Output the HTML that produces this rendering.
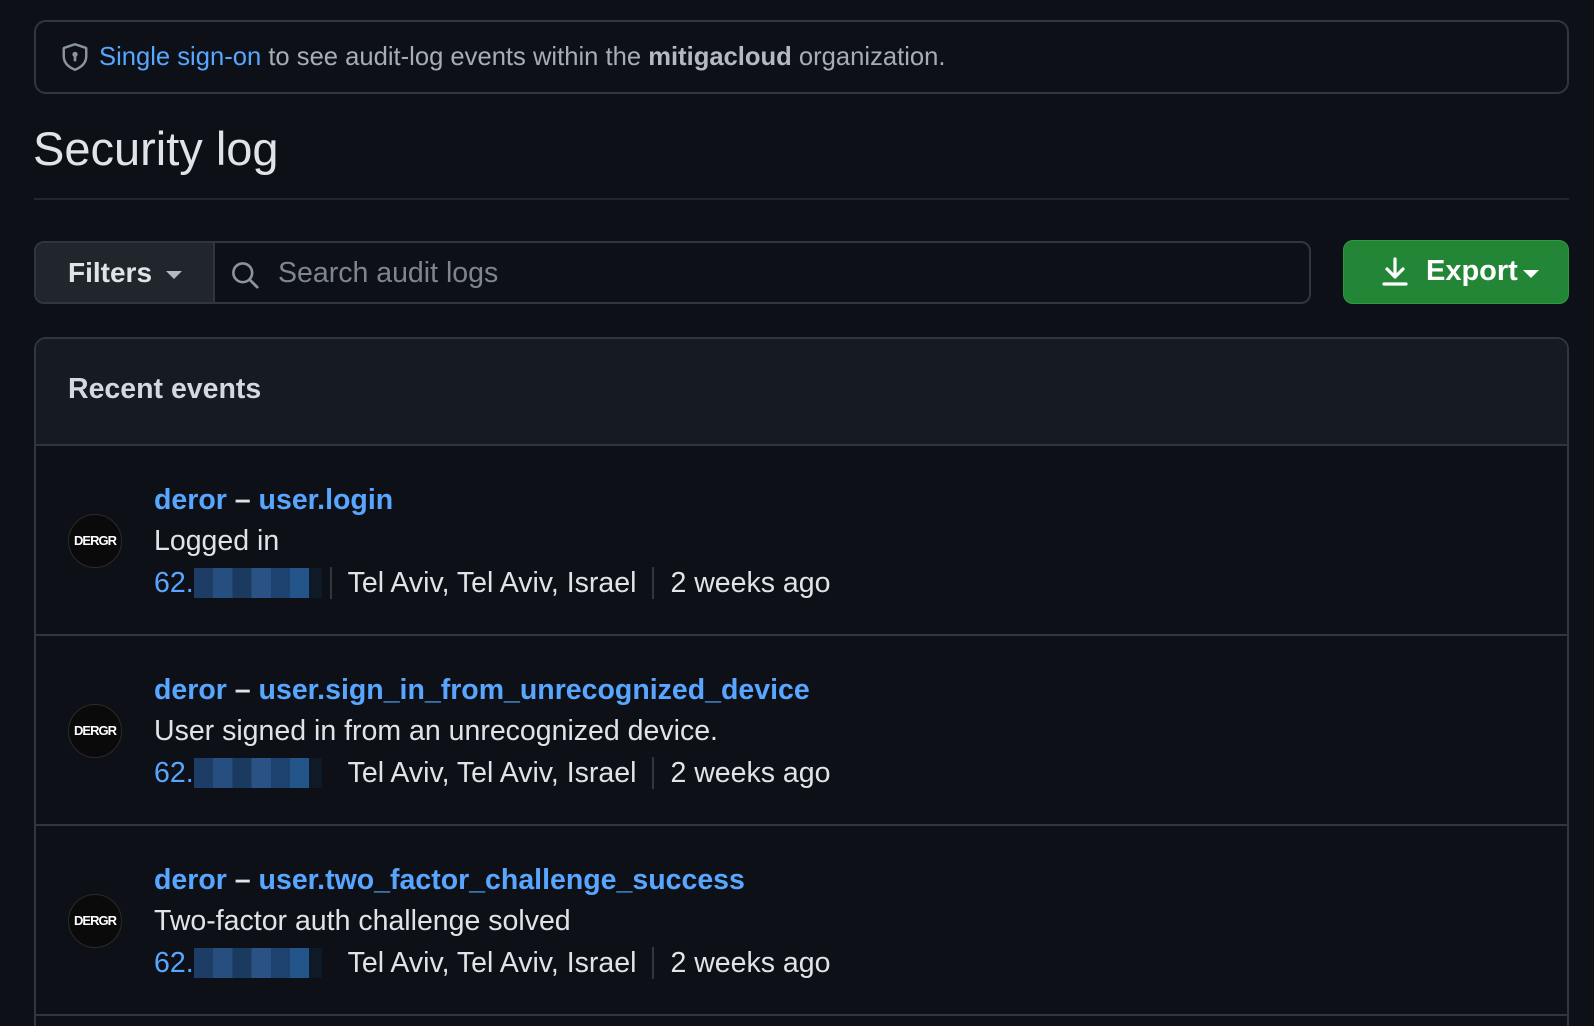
<!DOCTYPE html>
<html style="height:1026px;overflow:hidden"><head><meta charset="utf-8"><style>
*{box-sizing:border-box;margin:0;padding:0}
body{width:1594px;height:1026px;background:#0d1117;font-family:"Liberation Sans",sans-serif;color:#c9d1d9;position:relative;overflow:hidden}
.a{position:absolute;white-space:nowrap}
.blue{color:#58a6ff}
.banner{left:34px;top:20px;width:1535px;height:74px;border:2px solid #30363d;border-radius:12px}
.box{left:34px;top:337px;width:1535px;height:689px;border:2px solid #30363d;border-bottom:none;border-radius:12px 12px 0 0;overflow:hidden}
.hdr{position:absolute;left:0;top:0;right:0;height:107px;background:#161b22;border-bottom:2px solid #30363d}
.row{position:absolute;left:0;right:0;height:190px;border-bottom:2px solid #30363d}
.av{position:absolute;left:32px;width:54px;height:54px;border-radius:50%;background:#0a0a0a;border:1px solid #2a2a2a;color:#fff;font-weight:bold;font-size:13px;letter-spacing:-1px;text-align:center;line-height:52px}
.t{position:absolute;left:118px;font-size:28.5px;white-space:nowrap}
.blur{display:inline-block;width:128px;height:30px;vertical-align:-6px;background:linear-gradient(90deg,#1d3d66 0 15%,#264f80 15% 30%,#1b3a60 30% 45%,#2a5285 45% 60%,#1e4270 60% 75%,#24558a 75% 90%,#0f1a28 90%)}
.sep{display:inline-block;width:2px;height:32px;background:#30363d;vertical-align:-7px;margin:0 16px 0 16px}
.s1{margin-left:8px}
</style></head><body>
<div class="a banner"></div>
<svg class="a" style="left:60px;top:41px" width="30" height="32" viewBox="0 0 16 16"><path fill="none" stroke="#8b949e" stroke-width="1.3" d="M8 1.2 L2.3 3.1 Q2 3.2 2 3.6 V7.5 C2 11 4.6 13.4 8 14.8 C11.4 13.4 14 11 14 7.5 V3.6 Q14 3.2 13.7 3.1 Z"/><circle cx="8" cy="6.6" r="1.4" fill="#8b949e"/><rect x="7.3" y="7" width="1.4" height="3.3" fill="#8b949e"/></svg>
<div class="a" style="left:99px;top:43px;font-size:25.6px;color:#a5adb6"><span class="blue">Single sign-on</span> to see audit-log events within the <b style="color:#b3bac2">mitigacloud</b> organization.</div>
<div class="a" style="left:33px;top:121px;font-size:47px;color:#dfe4e9">Security log</div>
<div class="a" style="left:34px;top:198px;width:1535px;height:2px;background:#21262d"></div>
<div class="a" style="left:34px;top:241px;width:1277px;height:63px;border:2px solid #30363d;border-radius:10px;overflow:hidden">
 <div style="position:absolute;left:0;top:0;width:179px;height:100%;background:#21262d;border-right:2px solid #30363d"></div>
 <div style="position:absolute;left:32px;top:14px;font-size:28px;font-weight:bold;color:#dfe4e9">Filters</div>
 <div style="position:absolute;left:130px;top:28px;width:0;height:0;border-left:8px solid transparent;border-right:8px solid transparent;border-top:8px solid #b1bac4"></div>
 <svg style="position:absolute;left:194px;top:17px" width="30" height="30" viewBox="0 0 16 16"><circle cx="6.8" cy="6.8" r="5" fill="none" stroke="#8b949e" stroke-width="1.4"/><path d="M10.5 10.5 L14.5 14.5" stroke="#8b949e" stroke-width="1.5" stroke-linecap="round"/></svg>
 <div style="position:absolute;left:242px;top:14px;font-size:28.5px;color:#7d858e">Search audit logs</div>
</div>
<div class="a" style="left:1343px;top:240px;width:226px;height:64px;background:#238636;border-radius:10px;border:1px solid #2d9a40">
 <svg style="position:absolute;left:38px;top:16px" width="26" height="30" viewBox="0 0 13 15"><path d="M6.5 1 V10 M2.5 6 L6.5 10 L10.5 6 M1 13.5 H12" stroke="#fff" stroke-width="1.6" fill="none" stroke-linecap="round" stroke-linejoin="round"/></svg>
 <div style="position:absolute;left:82px;top:14px;font-size:29px;font-weight:bold;color:#fff">Export</div>
 <div style="position:absolute;left:179px;top:29px;width:0;height:0;border-left:8px solid transparent;border-right:8px solid transparent;border-top:8px solid #fff"></div>
</div>
<div class="a box">
 <div class="hdr"><div class="t" style="left:32px;top:34px;font-size:28.5px;font-weight:bold;color:#d3d9e0">Recent events</div></div>
 <div class="row" style="top:107px">
  <div class="av" style="top:68px">DERGR</div>
  <div class="t blue" style="top:38px;font-weight:bold">deror <span style="color:#dfe4e9">–</span> user.login</div>
  <div class="t" style="top:79px;color:#dfe4e9">Logged in</div>
  <div class="t" style="top:121px;color:#dfe4e9"><span class="blue">62.</span><span class="blur"></span><span class="sep s1"></span>Tel Aviv, Tel Aviv, Israel<span class="sep"></span>2 weeks ago</div>
 </div>
 <div class="row" style="top:297px">
  <div class="av" style="top:68px">DERGR</div>
  <div class="t blue" style="top:38px;font-weight:bold">deror <span style="color:#dfe4e9">–</span> user.sign_in_from_unrecognized_device</div>
  <div class="t" style="top:79px;color:#dfe4e9">User signed in from an unrecognized device.</div>
  <div class="t" style="top:121px;color:#dfe4e9"><span class="blue">62.</span><span class="blur"></span><span class="sep s1" style="background:transparent"></span>Tel Aviv, Tel Aviv, Israel<span class="sep"></span>2 weeks ago</div>
 </div>
 <div class="row" style="top:487px">
  <div class="av" style="top:68px">DERGR</div>
  <div class="t blue" style="top:38px;font-weight:bold">deror <span style="color:#dfe4e9">–</span> user.two_factor_challenge_success</div>
  <div class="t" style="top:79px;color:#dfe4e9">Two-factor auth challenge solved</div>
  <div class="t" style="top:121px;color:#dfe4e9"><span class="blue">62.</span><span class="blur"></span><span class="sep s1" style="background:transparent"></span>Tel Aviv, Tel Aviv, Israel<span class="sep"></span>2 weeks ago</div>
 </div>
</div>
</body></html>
